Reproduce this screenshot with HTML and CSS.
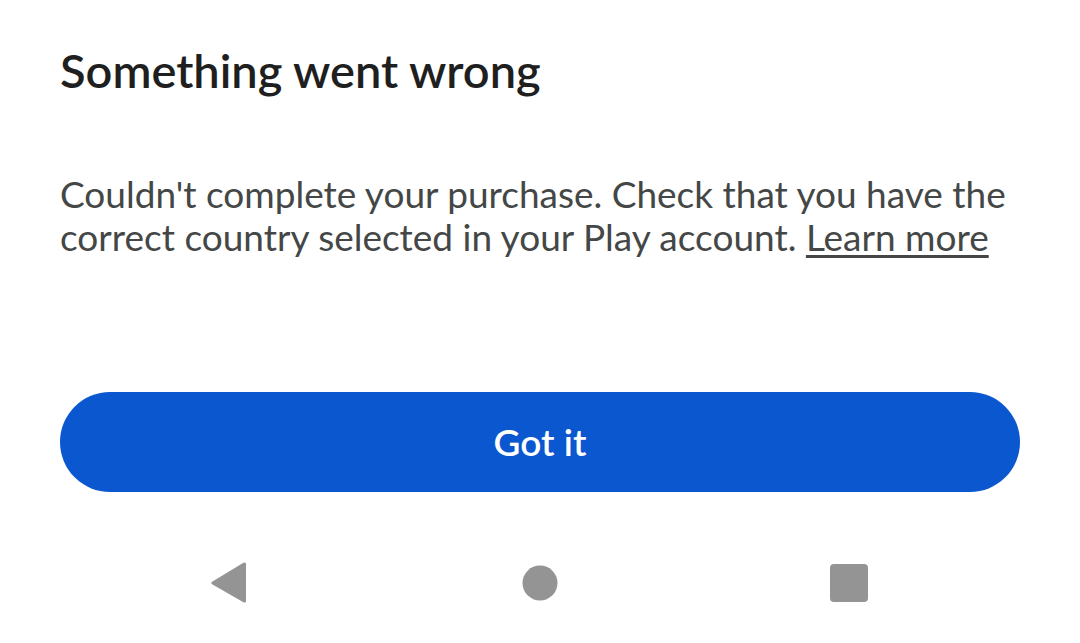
FILE: index.html
```html
<!DOCTYPE html>
<html lang="en">
  <head>
    <meta charset="UTF-8" />
    <meta name="viewport" content="width=device-width, initial-scale=1.0" />
    <title>Something went wrong</title>
    <link rel="stylesheet" href="styles.css">
  </head>
  <body>
    <main class="sheet">
      <h1>Something went wrong</h1>
      <p class="message">
        Couldn't complete your purchase. Check that you have the correct country selected in your Play account.
        <a href="#">Learn more</a>
      </p>
      <button type="button" class="confirm">Got it</button>
    </main>
    <nav class="navbar">
      <button type="button" aria-label="Back">
        <svg viewBox="0 0 40 44"><path d="M33 2q3-1.500 3 1v37q0 2.500-3 1L2.500 23.500q-2.500-1.500 0-3z" /></svg>
      </button>
      <button type="button" aria-label="Home">
        <svg viewBox="0 0 40 44"><circle cx="20" cy="22" r="17.5" /></svg>
      </button>
      <button type="button" aria-label="Recent apps">
        <svg viewBox="0 0 40 44"><rect x="0" y="3" width="38" height="38" rx="4" /></svg>
      </button>
    </nav>
  </body>
</html>
```
FILE: styles.css
```css
* {
  margin: 0;
  padding: 0;
  box-sizing: border-box;
}
body {
  background: #fff;
  color: #1f1f1f;
  font-family: Lato, sans-serif;
}
.sheet {
  padding: 42px 60px 0;
}
h1 {
  font-size: 47px;
  font-weight: 600;
  line-height: 56px;
}
.message {
  margin-top: 74px;
  color: #444746;
  font-size: 37px;
  line-height: 43px;
}
.message a {
  color: inherit;
  text-decoration-thickness: 3px;
  text-decoration-skip-ink: none;
  text-underline-offset: 4px;
}
.confirm {
  display: block;
  width: 100%;
  height: 100px;
  margin-top: 134px;
  padding-bottom: 2px;
  border: 0;
  border-radius: 50px;
  background: #0b57d0;
  color: #fff;
  font-family: inherit;
  font-size: 37px;
  font-weight: 600;
  cursor: pointer;
}
.navbar {
  display: flex;
  justify-content: space-around;
  padding: 69px 75px 0;
}
.navbar button {
  border: 0;
  background: none;
  cursor: pointer;
}
.navbar svg {
  display: block;
  width: 40px;
  height: 44px;
  fill: #949494;
}
```
